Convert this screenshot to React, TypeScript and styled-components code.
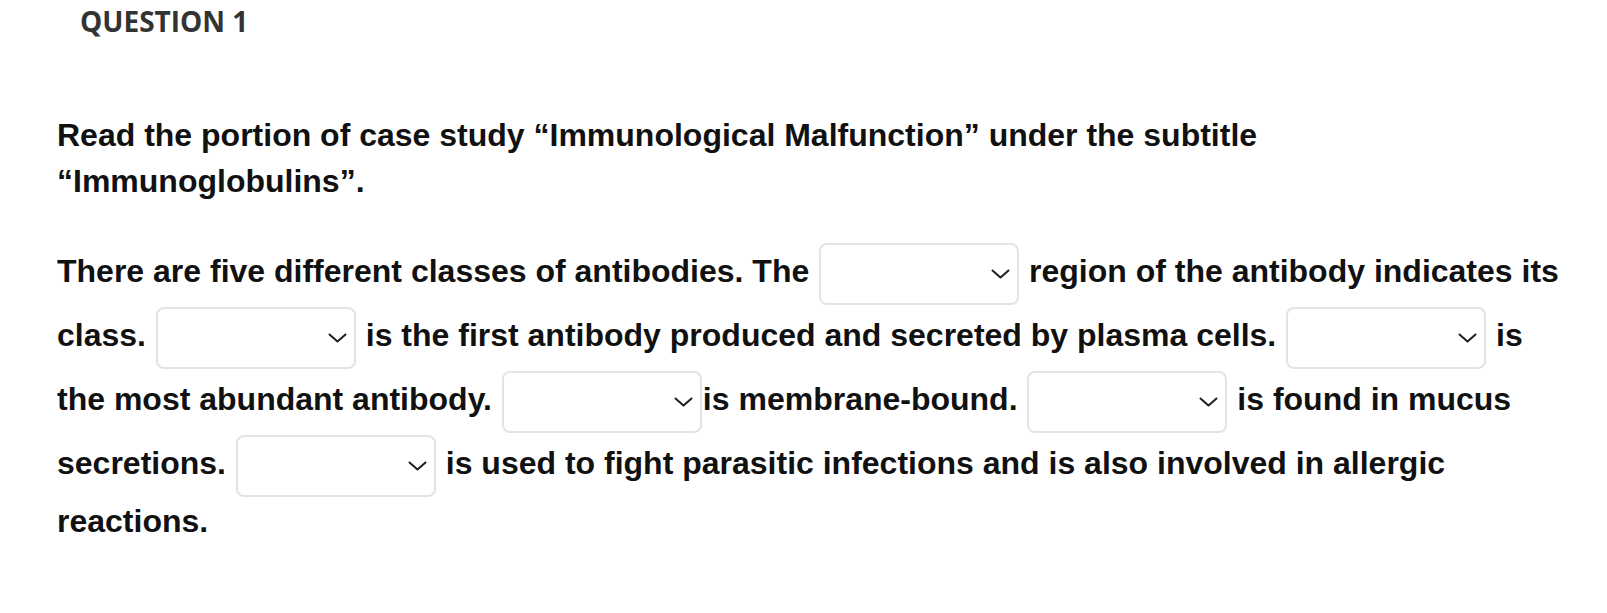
import React from "react";
import styled, { createGlobalStyle } from "styled-components";

const GlobalStyle = createGlobalStyle`
  html, body {
    margin: 0;
    padding: 0;
    background: #ffffff;
  }
  * { box-sizing: border-box; }
`;

const Page = styled.main`
  padding: 0 40px 40px 57px;
  font-family: "Liberation Sans", Arial, sans-serif;
  color: #111111;
`;

const QuestionTitle = styled.h2`
  margin: 0;
  padding: 2px 0 0 23px;
  font-family: "Open Sans", "Noto Sans", sans-serif;
  font-weight: 700;
  font-size: 28px;
  line-height: 38px;
  color: #333333;
`;

const Prompt = styled.p<{ $gap: number }>`
  margin: ${(p) => p.$gap}px 0 0 0;
  font-size: 32px;
  font-weight: 700;
  line-height: 46px;
`;

const DropBox = styled.span`
  display: inline-flex;
  align-items: center;
  justify-content: flex-end;
  vertical-align: middle;
  width: 200px;
  height: 62px;
  margin: 1px 1px;
  padding-right: 7px;
  border: 2px solid #e3e3e3;
  border-radius: 8px;
  background: #ffffff;
  cursor: pointer;
`;

const Chevron = styled.svg`
  width: 19px;
  height: 10px;
  display: block;
`;

const Dropdown: React.FC = () => (
  <DropBox role="combobox" aria-expanded="false">
    <Chevron viewBox="0 0 19 10" fill="none">
      <path d="M1.5 1.5 L9.5 8.5 L17.5 1.5" stroke="#1e1e1e" strokeWidth="2" strokeLinecap="round" strokeLinejoin="round" />
    </Chevron>
  </DropBox>
);

export default function App() {
  return (
    <>
      <GlobalStyle />
      <Page>
        <QuestionTitle>QUESTION 1</QuestionTitle>
        <Prompt $gap={72}>
          Read the portion of case study “Immunological Malfunction” under the subtitle “Immunoglobulins”.
        </Prompt>
        <Prompt $gap={38}>
          There are five different classes of antibodies. The <Dropdown /> region of the antibody indicates its class.{" "}
          <Dropdown /> is the first antibody produced and secreted by plasma cells. <Dropdown /> is the most abundant
          antibody. <Dropdown />is membrane-bound. <Dropdown /> is found in mucus secretions. <Dropdown /> is used to
          fight parasitic infections and is also involved in allergic reactions.
        </Prompt>
      </Page>
    </>
  );
}
